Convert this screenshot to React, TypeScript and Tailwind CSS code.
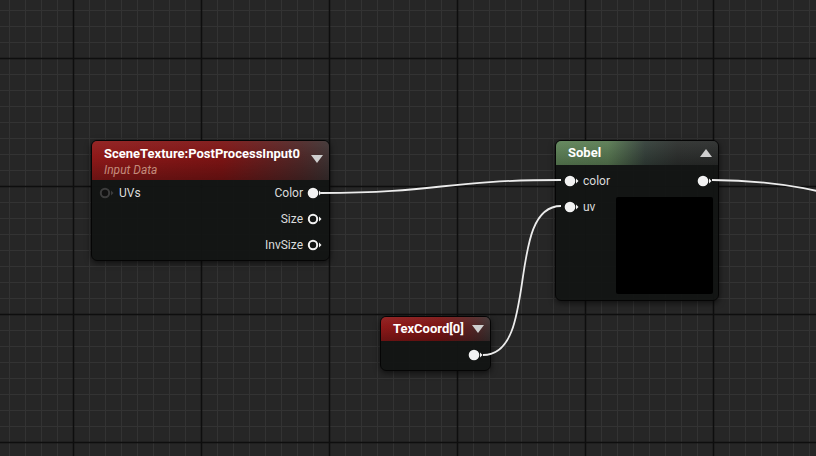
import React from 'react';

const W = 816;
const H = 456;

// grid lines: minor every 16px, major every 128px
const vLines = Array.from({ length: 52 }, (_, i) => 9 + i * 16);
const hLines = Array.from({ length: 30 }, (_, i) => 10 + i * 16);

function Pin({ filled = false, dim = false }: { filled?: boolean; dim?: boolean }) {
    const c = dim ? '#3c3c3c' : '#f2f2f2';
    return (
        <svg width="16" height="12" viewBox="0 0 16 12" className="shrink-0">
            {filled ? (
                <circle cx="6" cy="6" r="5.3" fill={c} />
            ) : (
                <circle cx="6" cy="6" r="4.2" fill={dim ? '#111' : 'none'} stroke={c} strokeWidth="2" />
            )}
            <path d="M12 3.5 L14.5 6 L12 8.5 Z" fill={c} />
        </svg>
    );
}

function Caret({ up = false }: { up?: boolean }) {
    return (
        <svg width="12" height="8" viewBox="0 0 12 8">
            {up ? <path d="M0 8 L6 0 L12 8 Z" fill="#cfcfcf" /> : <path d="M0 0 L12 0 L6 8 Z" fill="#cfcfcf" />}
        </svg>
    );
}

const nodeBase =
    'absolute flex flex-col rounded-[6px] border border-[#050505] bg-[rgba(18,20,19,0.93)] shadow-[0_2px_6px_rgba(0,0,0,0.6)] overflow-hidden';

const redHeader =
    'bg-[linear-gradient(180deg,rgba(255,255,255,0.06)_0%,rgba(0,0,0,0)_40%,rgba(0,0,0,0.25)_100%),linear-gradient(90deg,#8e1919_0%,#7c1414_55%,#4e2727_88%,#3d3232_100%)]';

export default function App() {
    return (
        <div
            className="relative w-[816px] h-[456px] overflow-hidden bg-[#262626] text-[#dcdcdc]"
            style={{ fontFamily: 'Roboto, "Liberation Sans", sans-serif' }}
        >
            <svg className="absolute inset-0" width={W} height={H}>
                {vLines.map((x) => (
                    <line key={'v' + x} x1={x + 0.5} y1={0} x2={x + 0.5} y2={H} stroke="#333333" strokeWidth="1" />
                ))}
                {hLines.map((y) => (
                    <line key={'h' + y} x1={0} y1={y + 0.5} x2={W} y2={y + 0.5} stroke="#333333" strokeWidth="1" />
                ))}
                {[73, 201, 329, 457, 585, 713].map((x) => (
                    <line key={'V' + x} x1={x + 0.5} y1={0} x2={x + 0.5} y2={H} stroke="#0e0e0e" strokeWidth="1.5" />
                ))}
                {[58, 186, 314, 442].map((y) => (
                    <line key={'H' + y} x1={0} y1={y + 0.5} x2={W} y2={y + 0.5} stroke="#0e0e0e" strokeWidth="1.5" />
                ))}
            </svg>

            {/* SceneTexture node */}
            <div className={nodeBase + ' left-[91px] top-[140px] w-[239px] h-[121px]'}>
                <div className={redHeader + ' h-[39px] flex items-start justify-between pl-3 pr-[6px] pt-[6px]'}>
                    <div className="flex flex-col leading-none">
                        <span className="text-[13px] font-bold text-white">SceneTexture:PostProcessInput0</span>
                        <span className="mt-[4px] text-[12px] italic text-[#c48c7c]">Input Data</span>
                    </div>
                    <div className="pt-[8px]">
                        <Caret />
                    </div>
                </div>
                <div className="flex flex-col text-[12px]">
                    <div className="h-[26px] flex items-center justify-between pl-[7px] pr-[6px]">
                        <div className="flex items-center gap-[4px]">
                            <Pin dim />
                            <span>UVs</span>
                        </div>
                        <div className="flex items-center gap-[4px]">
                            <span>Color</span>
                            <Pin filled />
                        </div>
                    </div>
                    <div className="h-[26px] flex items-center justify-end pr-[6px] gap-[4px]">
                        <span>Size</span>
                        <Pin />
                    </div>
                    <div className="h-[26px] flex items-center justify-end pr-[6px] gap-[4px]">
                        <span>InvSize</span>
                        <Pin />
                    </div>
                </div>
            </div>

            {/* Sobel node */}
            <div className={nodeBase + ' left-[555px] top-[140px] w-[164px] h-[161px]'}>
                <div className="h-[24px] flex items-center justify-between pl-3 pr-[6px] bg-[linear-gradient(180deg,rgba(255,255,255,0.05)_0%,rgba(0,0,0,0.2)_100%),linear-gradient(90deg,#5f8458_0%,#5a7c53_32%,#34403a_55%,#2d302e_75%,#2b2d2c_100%)]">
                    <span className="text-[13px] font-bold text-white">Sobel</span>
                    <Caret up />
                </div>
                <div className="flex pt-[3px] text-[12px]">
                    <div className="flex flex-col pl-[8px] w-[60px]">
                        <div className="h-[26px] flex items-center gap-[3px]">
                            <Pin filled />
                            <span>color</span>
                        </div>
                        <div className="h-[26px] flex items-center gap-[3px]">
                            <Pin filled />
                            <span>uv</span>
                        </div>
                    </div>
                    <div className="flex-1 flex flex-col items-end pr-[5px]">
                        <div className="h-[26px] flex items-center">
                            <Pin filled />
                        </div>
                        <div className="mt-[3px] w-[97px] h-[97px] bg-black rounded-[2px]" />
                    </div>
                </div>
            </div>

            {/* TexCoord node */}
            <div className={nodeBase + ' left-[380px] top-[316px] w-[111px] h-[55px]'}>
                <div className={redHeader + ' h-[24px] flex items-center justify-between pl-3 pr-[6px]'}>
                    <span className="text-[13px] font-bold text-white">TexCoord[0]</span>
                    <Caret />
                </div>
                <div className="flex-1 flex items-center justify-end pr-[6px] pb-[2px]">
                    <Pin filled />
                </div>
            </div>

            {/* wires */}
            <svg className="absolute inset-0 pointer-events-none" width={W} height={H}>
                <g fill="none" stroke="#ececec" strokeWidth="1.8">
                    <path d="M321 193 C441 193 441 180 561 180" />
                    <path d="M712 180 C790 180 840 196 900 212" />
                    <path d="M483 355 C540 355 505 206 561 206" />
                </g>
            </svg>
        </div>
    );
}
